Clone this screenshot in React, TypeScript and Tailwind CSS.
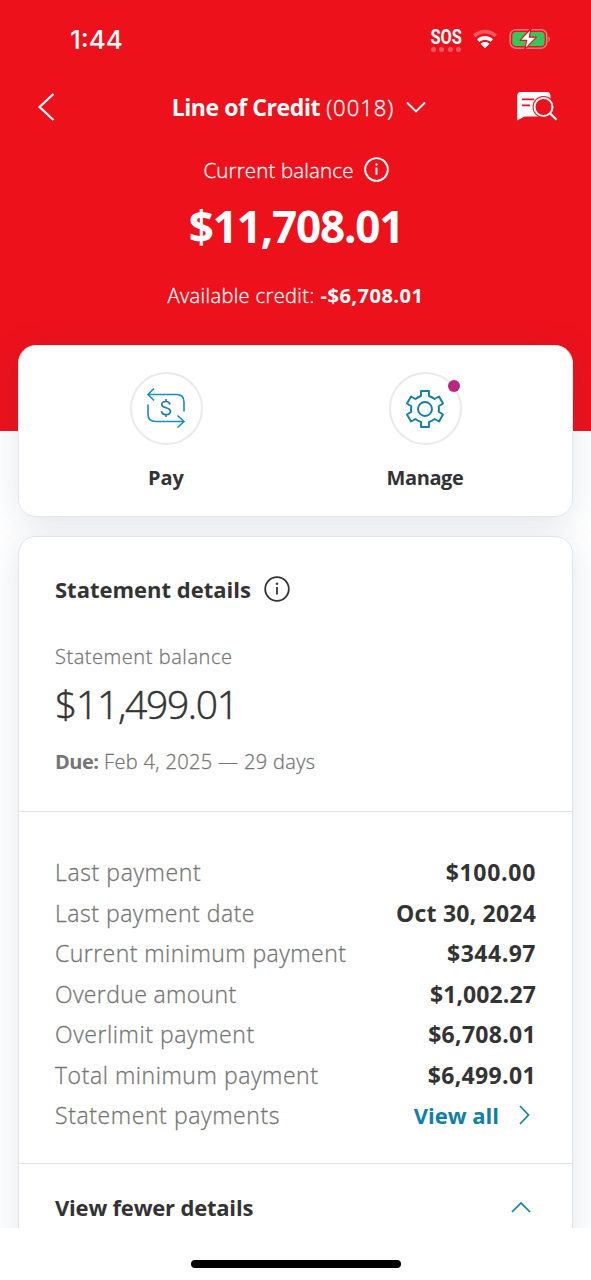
import React from 'react';

const paymentRows = [
  { label: 'Last payment', value: '$100.00', labelTracking: 'tracking-[0.6px]', valueTracking: 'tracking-[0.7px]' },
  { label: 'Last payment date', value: 'Oct 30, 2024', labelTracking: 'tracking-[0.52px]', valueTracking: 'tracking-[0.2px]' },
  { label: 'Current minimum payment', value: '$344.97', labelTracking: 'tracking-[0.46px]', valueTracking: 'tracking-[0.5px]' },
  { label: 'Overdue amount', value: '$1,002.27', labelTracking: 'tracking-[0.36px]', valueTracking: 'tracking-[0.1px]' },
  { label: 'Overlimit payment', value: '$6,708.01', labelTracking: 'tracking-[0.57px]', valueTracking: 'tracking-[0.3px]' },
  { label: 'Total minimum payment', value: '$6,499.01', labelTracking: 'tracking-[0.56px]', valueTracking: 'tracking-[0.35px]' },
];

const StatusIcons: React.FC = () => (
  <div className="flex items-start">
    <div className="w-8 flex flex-col items-center">
      <span className="block h-[20px] leading-[20px] text-[21px] font-bold font-['Roboto',sans-serif] scale-x-[0.78] whitespace-nowrap">SOS</span>
      <div className="flex justify-between w-[31px]">
        {[0, 1, 2, 3].map((dot) => (
          <span key={dot} className="size-[5px] rounded-full bg-white/30" />
        ))}
      </div>
    </div>
    <svg className="ml-[10px] mt-[1px]" width="26" height="21" viewBox="0 0 26 21" fill="none">
      <path d="M1 6.500C8 .1 18 .1 25 6.500L22.300 9.200C17 4.400 9 4.400 3.700 9.200Z" fill="#fff" opacity=".3" />
      <path d="M5 11.300C9.700 7 16.300 7 21 11.300L18.600 13.900C15.400 11.300 10.600 11.300 7.400 13.900Z" fill="#fff" />
      <path d="M9 15.800C11.300 14 14.700 14 17 15.800L13 19.800Z" fill="#fff" stroke="#fff" strokeLinejoin="round" />
    </svg>
    <svg className="ml-[11px]" width="43" height="24" viewBox="0 0 43 24" fill="none">
      <rect x="1.200" y="2.700" width="36.500" height="18.500" rx="5.500" stroke="#fff" strokeOpacity=".45" strokeWidth="1.500" />
      <rect x="3.300" y="4.900" width="32.300" height="14.200" rx="3.500" fill="#35c759" />
      <path d="M39.500 9.500V15C41.700 14 41.700 10.500 39.500 9.500Z" fill="#fff" opacity=".45" />
      <path d="M22 1.500L11 13.400H17.700L15.600 22.300L27.500 10.200H20.300Z" fill="#fff" stroke="#ed111c" strokeWidth="1.200" strokeLinejoin="round" />
    </svg>
  </div>
);

const InfoIcon: React.FC<{ size: number; stroke: number }> = ({ size, stroke }) => (
  <svg width={size} height={size} viewBox="0 0 26 26" fill="none" stroke="currentColor" strokeWidth={stroke}>
    <circle cx="13" cy="13" r="11.800" />
    <path d="M13 11V18.500" />
    <circle cx="13" cy="7.800" r="1" fill="currentColor" strokeWidth=".6" />
  </svg>
);

const SearchMessageIcon: React.FC = () => (
  <svg width="42" height="32" viewBox="0 0 42 32" fill="none">
    <path d="M5 1H30.500Q34.500 1 34.500 5V25.500H8.500L1.200 29.500V5Q1.200 1 5 1Z" fill="#fff" />
    <path d="M6 8.300H18M6 14.300H14" stroke="#ed111c" strokeWidth="1.800" />
    <circle cx="27.500" cy="16" r="11" fill="#ed111c" />
    <path d="M27 24.500H36V30H27Z" fill="#ed111c" />
    <circle cx="27.500" cy="16" r="9" stroke="#fff" strokeWidth="2" />
    <path d="M34.200 22.500L40.500 28.700" stroke="#fff" strokeWidth="2.200" />
  </svg>
);

const PayIcon: React.FC = () => (
  <svg className="mr-px mb-px" width="40" height="42" viewBox="0 0 40 42" fill="none" stroke="#1b8fb5" strokeWidth="1.600">
    <path d="M2 7.500H30.500Q38 7.500 38 15V24.500" />
    <path d="M8 1.500L2 7.500L8 13.500" />
    <path d="M2 17.500V27Q2 34.500 9.500 34.500H38" />
    <path d="M31.500 28.500L38 34.500L31.500 40.500" />
    <path d="M24 17.500C23.500 15.200 22 14.500 20 14.500C17.500 14.500 15.800 15.600 15.800 17.600C15.800 22 24.400 19.400 24.400 24.300C24.400 26.500 22.500 27.700 20 27.700C17.500 27.700 15.800 26.500 15.500 24.200M20 12V14.500M20 27.700V30" stroke="#1a7fa6" strokeWidth="1.700" />
  </svg>
);

const GearIcon: React.FC = () => (
  <svg className="mr-px" width="40" height="40" viewBox="0 0 40 40" fill="none" stroke="#137fa6" strokeWidth="1.900" strokeLinejoin="round">
    <path d="M16 2H24V7Q27 8 29.500 10L34 7.500L38 14.500L33.700 17.200Q34.300 20 33.700 22.800L38 25.500L34 32.500L29.500 30Q27 32 24 33V38H16V33Q13 32 10.500 30L6 32.500L2 25.500L6.300 22.800Q5.700 20 6.300 17.200L2 14.500L6 7.500L10.500 10Q13 8 16 7Z" />
    <circle cx="20" cy="20" r="7" />
  </svg>
);

const App: React.FC = () => {
  return (
    <div className="w-[591px] h-[1280px] flex flex-col overflow-hidden bg-white text-[#333] font-['Open_Sans','Noto_Sans',sans-serif]">
      <div className="h-[1228px] overflow-hidden">
        {/* Account header */}
        <header className="h-[431px] bg-[#ed111c] text-white">
          <div className="h-[78px] pl-[70px] pr-[39px] flex justify-between">
            <span className="pt-[24px] h-8 leading-8 text-[26px] font-medium font-['Inter',sans-serif]">1:44</span>
            <div className="pt-[27px]">
              <StatusIcons />
            </div>
          </div>
          <div className="h-[58px] pl-[37px] pr-[33px] flex items-center justify-between">
            <svg width="20" height="30" viewBox="0 0 20 30" fill="none" stroke="#fff" strokeWidth="2.200">
              <path d="M16.500 2L2.500 15L16.500 28" />
            </svg>
            <h1 className="ml-[25px] flex items-center text-[23px]">
              <span className="font-bold tracking-[-0.4px]">Line of Credit</span>
              <span className="ml-[6px] font-light text-[22px] tracking-[1px] [-webkit-text-stroke:0.35px_currentColor]">(0018)</span>
              <svg className="ml-3" width="20" height="12" viewBox="0 0 20 12" fill="none" stroke="#fff" strokeWidth="1.900">
                <path d="M1 1.500L10 10.500L19 1.500" />
              </svg>
            </h1>
            <SearchMessageIcon />
          </div>
          <div className="h-[67px] pl-px flex items-center justify-center gap-[10px]">
            <span className="pt-[2px] text-[20.500px] font-light tracking-[0.15px] [-webkit-text-stroke:0.3px_currentColor]">Current balance</span>
            <InfoIcon size={25} stroke={2} />
          </div>
          <div className="h-[46px] pl-px flex items-center justify-center text-[44px] font-bold tracking-[-1.2px]">$11,708.01</div>
          <div className="h-[93px] flex items-center justify-center gap-[6px] text-[20px]">
            <span className="font-light tracking-[0.4px] [-webkit-text-stroke:0.3px_currentColor]">Available credit:</span>
            <span className="font-bold tracking-[0.5px]">-$6,708.01</span>
          </div>
        </header>

        {/* Quick actions */}
        <section className="relative -mt-[86px] mx-[18px] h-[172px] pt-[26px] pl-[18px] pr-[17px] flex rounded-[18px] border border-[#e3e8ec] bg-white shadow-[0_6px_34px_rgba(40,70,100,0.13)]">
          <div className="flex-1 flex flex-col items-center">
            <div className="size-[73px] rounded-full border-2 border-[#e9eaec] flex items-center justify-center">
              <PayIcon />
            </div>
            <span className="mt-[17px] mr-px leading-8 text-[20px] font-bold">Pay</span>
          </div>
          <div className="flex-1 flex flex-col items-center">
            <div className="relative size-[73px] rounded-full border-2 border-[#e9eaec] flex items-center justify-center">
              <GearIcon />
              <span className="absolute top-[6px] right-0 size-3 rounded-full bg-[#b92580]" />
            </div>
            <span className="mt-[17px] mr-px leading-8 text-[20px] font-bold tracking-[-0.4px]">Manage</span>
          </div>
        </section>

        {/* Statement */}
        <section className="relative mt-[19px] mx-[18px] h-[760px] rounded-[18px] border border-[#dfe5ea] bg-white shadow-[0_6px_34px_rgba(40,70,100,0.13)]">
          <div className="h-[275px] px-9 pt-9 border-b border-[#dfe5ea]">
            <h2 className="h-8 flex items-center gap-[13px] text-[22px] font-bold">
              Statement details
              <InfoIcon size={26} stroke={1.800} />
            </h2>
            <p className="mt-[36px] h-8 leading-8 text-[20px] font-light tracking-[0.55px] text-[#757575] [-webkit-text-stroke:0.3px_currentColor]">Statement balance</p>
            <p className="mt-[7px] h-12 leading-[48px] text-[39px] font-light tracking-[-1.3px] [-webkit-text-stroke:0.5px_currentColor]">$11,499.01</p>
            <p className="mt-[18px] h-8 leading-8 text-[20px] font-light tracking-[0.35px] text-[#757575] [-webkit-text-stroke:0.3px_currentColor]">
              <span className="font-bold tracking-[-0.5px] [-webkit-text-stroke:0px]">Due:</span> Feb 4, 2025 — 29 days
            </p>
          </div>
          <div className="h-[352px] px-9 pt-10 border-b border-[#dfe5ea] text-[23px]">
            {paymentRows.map((row) => (
              <div key={row.label} className="h-[40.5px] flex items-center justify-between">
                <span className={`font-light text-[#757575] [-webkit-text-stroke:0.3px_currentColor] ${row.labelTracking}`}>{row.label}</span>
                <span className={`font-bold ${row.valueTracking}`}>{row.value}</span>
              </div>
            ))}
            <div className="h-[40.5px] flex items-center justify-between">
              <span className="font-light tracking-[0.6px] text-[#757575] [-webkit-text-stroke:0.3px_currentColor]">Statement payments</span>
              <span className="flex items-center text-[#117fa5] text-[22px] font-bold">
                View all
                <svg className="ml-[20px] mr-[6px]" width="11" height="20" viewBox="0 0 11 20" fill="none" stroke="currentColor" strokeWidth="1.700">
                  <path d="M1 1L9.500 10L1 19" />
                </svg>
              </span>
            </div>
          </div>
          <div className="h-[86px] pl-9 pr-[41px] flex items-center justify-between">
            <span className="text-[22px] font-bold tracking-[-0.2px]">View fewer details</span>
            <svg width="20" height="12" viewBox="0 0 20 12" fill="none" stroke="#117fa5" strokeWidth="1.700">
              <path d="M1 11L10 2L19 11" />
            </svg>
          </div>
        </section>
      </div>

      {/* Home indicator */}
      <footer className="h-[52px] pt-8 flex justify-center bg-white">
        <div className="w-[210px] h-2 rounded-full bg-black" />
      </footer>
    </div>
  );
};

export default App;
